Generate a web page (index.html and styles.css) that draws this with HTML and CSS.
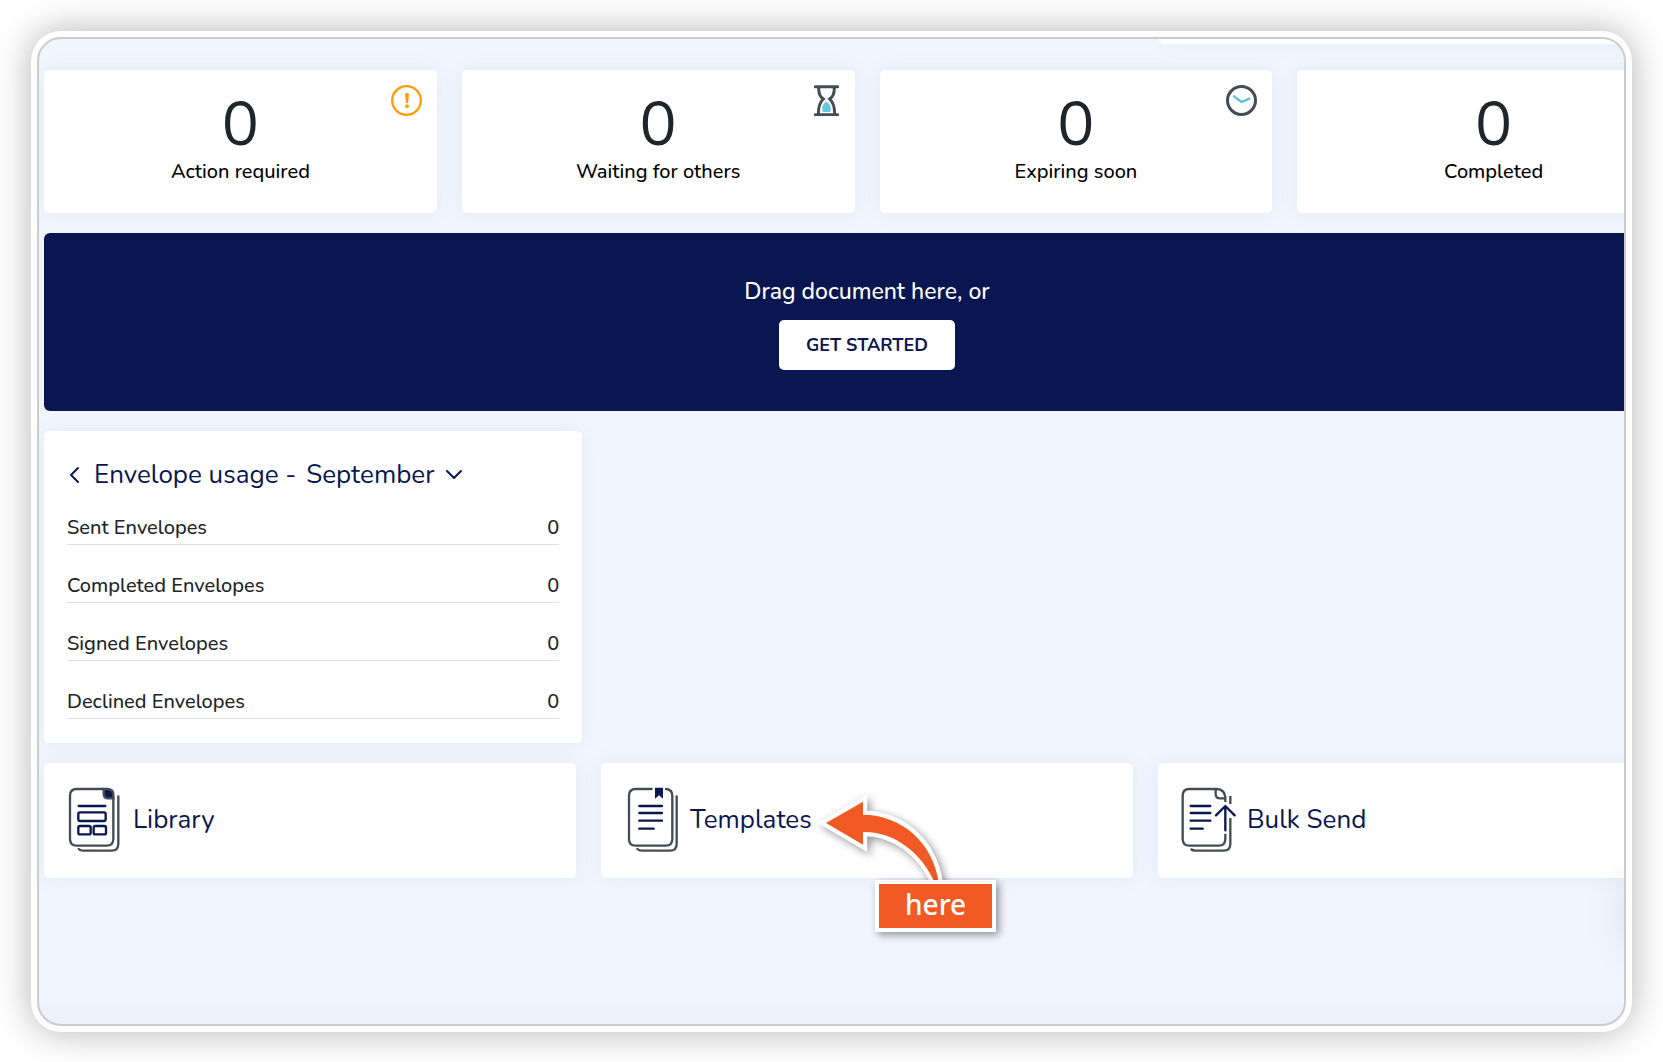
FILE: index.html
```html
<!DOCTYPE html>
<html lang="en">
<head>
<meta charset="utf-8">
<meta name="viewport" content="width=device-width, initial-scale=1">
<title>Dashboard</title>
<link rel="stylesheet" href="styles.css">
</head>
<body>
<div class="frame">
  <main class="screen">
    <div class="content">
      <div class="toolbar-card"></div>

      <section class="stats">
        <article class="card stat">
          <svg class="stat-icon" viewBox="0 0 93 93" aria-hidden="true">
            <circle cx="46.500" cy="46.500" r="43" fill="none" stroke="#ff9c0a" stroke-width="7"/>
            <path d="M42 27q0-3 6-3t6 3l-3 27h-6z" fill="#ff9c0a"/>
            <circle cx="48" cy="63.500" r="5.500" fill="#ff9c0a"/>
          </svg>
          <div class="stat-value">0</div>
          <div class="stat-label">Action required</div>
        </article>
        <article class="card stat">
          <svg class="stat-icon" viewBox="0 0 93 93" aria-hidden="true">
            <g fill="none" stroke="#454c53" stroke-width="9" stroke-linecap="round">
              <path d="M19 5H86M19 89H86"/>
              <path d="M29 6C29 26 32 34 43 42C34 50 28 66 28 88M76 6C76 26 73 34 62 42C71 50 77 66 77 88" stroke-linecap="butt"/>
            </g>
            <path d="M52 50C58 54 65 60 65 67V78Q65 81 62 81H43Q40 81 40 78V67C40 60 46 54 52 50Z" fill="#68c4e0"/>
          </svg>
          <div class="stat-value">0</div>
          <div class="stat-label">Waiting for others</div>
        </article>
        <article class="card stat">
          <svg class="stat-icon" viewBox="0 0 93 93" aria-hidden="true">
            <circle cx="46.500" cy="46.500" r="42" fill="none" stroke="#454c53" stroke-width="9"/>
            <path d="M24 34L47 51L70 41" fill="none" stroke="#5fc0de" stroke-width="7" stroke-linecap="round" stroke-linejoin="round"/>
          </svg>
          <div class="stat-value">0</div>
          <div class="stat-label">Expiring soon</div>
        </article>
        <article class="card stat">
          <div class="stat-value">0</div>
          <div class="stat-label">Completed</div>
        </article>
      </section>

      <section class="dropzone">
        <p class="dropzone-text">Drag document here, or</p>
        <button class="start-button" type="button">GET STARTED</button>
      </section>

      <section class="card usage">
        <div class="usage-head">
          <button class="previous" type="button" aria-label="Previous month">
            <svg width="12" height="18" viewBox="0 0 12 18" aria-hidden="true"><path d="M10 2L3 9L10 16"/></svg>
          </button>
          <label class="usage-title" for="month">Envelope usage -</label>
          <div class="month">
            <select class="month-select" id="month">
              <option>May</option>
              <option>June</option>
              <option>July</option>
              <option>August</option>
              <option selected>September</option>
            </select>
            <svg width="18" height="12" viewBox="0 0 18 12" aria-hidden="true"><path d="M2 2L9 9L16 2"/></svg>
          </div>
        </div>
        <table class="usage-table">
          <tr><th scope="row">Sent Envelopes</th><td>0</td></tr>
          <tr><th scope="row">Completed Envelopes</th><td>0</td></tr>
          <tr><th scope="row">Signed Envelopes</th><td>0</td></tr>
          <tr><th scope="row">Declined Envelopes</th><td>0</td></tr>
        </table>
      </section>

      <nav class="shortcuts">
        <a class="card shortcut" href="#library">
          <svg class="shortcut-icon" viewBox="57 60 156 195" aria-hidden="true">
            <g fill="none" stroke="#454c53" stroke-width="7" stroke-linecap="round">
              <path d="M160 63H80Q60 63 60 83V213Q60 233 80 233H170Q190 233 190 213V90"/>
              <path d="M205 85V228Q205 248 185 248H100Q91 248 86 243"/>
            </g>
            <path d="M161 63H174Q190 65 190 80V91H174Q161 91 161 77Z" fill="#0a1650" stroke="#454c53" stroke-width="7"/>
            <g fill="none" stroke="#0a1650" stroke-width="7" stroke-linecap="round">
              <path d="M86 114H166"/>
              <rect x="85" y="133" width="82" height="26" rx="5"/>
              <rect x="85" y="174" width="37" height="25" rx="5"/>
              <rect x="131" y="174" width="37" height="25" rx="5"/>
            </g>
          </svg>
          <span>Library</span>
        </a>
        <div class="shortcut-slot">
          <a class="card shortcut" href="#templates">
            <svg class="shortcut-icon" viewBox="48 60 156 195" aria-hidden="true">
              <g fill="none" stroke="#454c53" stroke-width="7" stroke-linecap="round">
                <path d="M125 63H77Q57 63 57 83V213Q57 233 77 233H167Q187 233 187 213V83Q187 65 168 63"/>
                <path d="M200 85V228Q200 248 180 248H96Q87 248 82 243"/>
              </g>
              <path d="M135 59H159V92L147 82L135 92Z" fill="#0a1650"/>
              <path d="M88 114H156M88 135H156M88 158H156M88 182H131" fill="none" stroke="#0a1650" stroke-width="7" stroke-linecap="round"/>
            </svg>
            <span>Templates</span>
          </a>
          <div class="callout">
            <svg class="callout-arrow" viewBox="600 60 600 300" aria-hidden="true">
              <path d="M648 162L759 98V137C870 138 969 215 987 345L976 345C936 250 850 186 759 189V227Z"/>
            </svg>
            <span class="callout-label">here</span>
          </div>
        </div>
        <a class="card shortcut" href="#bulk-send">
          <svg class="shortcut-icon" viewBox="99 60 156 195" aria-hidden="true">
            <g fill="none" stroke="#454c53" stroke-width="7" stroke-linecap="butt">
              <path d="M226 102V88Q224 64 200 63H118Q98 63 98 83V213Q98 233 118 233H206Q226 233 226 213V197"/>
              <path d="M197 64V78Q197 91 210 91H226"/>
              <path d="M241 84V108M241 150V228Q241 248 221 248H138Q128 248 122 243"/>
            </g>
            <path d="M122 114H181M122 135H181M122 158H181M122 182H158M226 187V116M198 142L226 114L254 142" fill="none" stroke="#0a1650" stroke-width="7" stroke-linecap="round" stroke-linejoin="round"/>
          </svg>
          <span>Bulk Send</span>
        </a>
      </nav>
    </div>
  </main>
</div>
</body>
</html>
```
FILE: styles.css
```css
* {
  box-sizing: border-box;
}

body {
  margin: 0;
  padding: 31px 31px 30px;
  min-height: 100vh;
  display: flex;
  background: #fff;
  color: #212529;
  font-family: "Nunito", "Lato", sans-serif;
  font-size: 20px;
  font-weight: 500;
  line-height: 24px;
}

button,
select {
  font: inherit;
  color: inherit;
  border: 0;
  background: none;
  padding: 0;
  margin: 0;
}

.frame {
  flex: 1;
  min-width: 0;
  display: flex;
  padding: 6px;
  border-radius: 30px;
  background: #fff;
  box-shadow: 0 0 36px rgba(0, 0, 0, 0.3);
}

.screen {
  position: relative;
  flex: 1;
  min-width: 0;
  overflow: hidden;
  border: 2px solid #ccc;
  border-radius: 24px;
  background: linear-gradient(to top, #eaf1f9, #f0f5fe 32px);
}

/* soft edge of the help bubble docked beyond the right side */
.screen::after {
  content: "";
  position: absolute;
  right: -74px;
  bottom: 75px;
  width: 68px;
  height: 68px;
  border-radius: 50%;
  box-shadow: 0 0 50px rgba(20, 40, 80, 0.16);
}

/* the dashboard runs past the right side of the screen */
.content {
  display: flex;
  flex-direction: column;
  gap: 20px;
  margin: 0 -66px 0 5px;
}

.card {
  border-radius: 5px;
  background: #fff;
  box-shadow: 0 0 20px rgba(80, 130, 150, 0.08);
}

.toolbar-card {
  align-self: flex-end;
  width: calc((100% - 50px) / 3);
  height: 5px;
  margin-bottom: 6px;
  border-radius: 0 0 5px 5px;
  background: #fff;
  box-shadow: 0 0 20px rgba(80, 130, 150, 0.08);
}

.stats {
  display: grid;
  grid-template-columns: repeat(4, 1fr);
  gap: 25px;
}

.stat {
  position: relative;
  padding: 23px 20px 29px;
  text-align: center;
}

.stat-icon {
  position: absolute;
  top: 15px;
  right: 15px;
  width: 31px;
  height: 31px;
}

.stat-value {
  font-size: 62px;
  font-weight: 400;
  line-height: 64px;
}

.stat-label {
  margin-top: 3px;
  color: #000;
}

.dropzone {
  display: flex;
  flex-direction: column;
  align-items: center;
  gap: 13px;
  padding: 44px 20px 41px;
  border-radius: 6px;
  background: #0a1650;
}

.dropzone-text {
  margin: 0;
  color: #fff;
  font-size: 23px;
  line-height: 30px;
}

.start-button {
  height: 50px;
  padding: 0 27px;
  border-radius: 5px;
  background: #fff;
  color: #0a1650;
  font-size: 18px;
  font-weight: 700;
}

.usage {
  width: calc(33% - 5px);
  padding: 33px 23px 24px;
}

.usage-head {
  display: flex;
  align-items: center;
  height: 22px;
  padding-left: 1px;
  color: #0a1650;
  font-size: 26px;
  font-weight: 400;
  line-height: 32px;
}

.usage-head svg {
  display: block;
  fill: none;
  stroke: currentColor;
  stroke-width: 2;
  stroke-linecap: round;
  stroke-linejoin: round;
}

.previous {
  margin-right: 14px;
}

.usage-title {
  margin-right: 10px;
}

.month {
  display: flex;
  align-items: center;
  gap: 10px;
}

.month-select {
  appearance: none;
}

.usage-table {
  width: 100%;
  border-collapse: collapse;
}

.usage-table th,
.usage-table td {
  height: 58px;
  padding: 0 0 4px;
  border-bottom: 1px solid #dedfe0;
  font-weight: 500;
  text-align: left;
  vertical-align: bottom;
}

.usage-table td {
  text-align: right;
}

.shortcuts {
  display: grid;
  grid-template-columns: repeat(3, 1fr);
  gap: 25px;
}

.shortcut-slot {
  position: relative;
}

.shortcut {
  display: flex;
  align-items: center;
  gap: 12px;
  padding: 25px 25px;
  color: #0a1650;
  font-size: 26px;
  font-weight: 400;
  line-height: 32px;
  text-decoration: none;
}

.shortcut-icon {
  width: 52px;
  height: 65px;
  overflow: visible;
}

.callout {
  position: absolute;
  top: 26px;
  left: 209px;
  width: 200px;
}

.callout-arrow {
  display: block;
  width: 200px;
  height: 100px;
  overflow: visible;
  filter: drop-shadow(3px 3px 4px rgba(0, 0, 0, 0.4));
}

.callout-arrow path {
  fill: #f15a24;
  stroke: #fff;
  stroke-width: 25;
  stroke-miterlimit: 6;
  paint-order: stroke;
}

.callout-label {
  position: absolute;
  top: 91px;
  left: 65px;
  width: 121px;
  padding: 3px 0 7px;
  border: 4px solid #fff;
  background: #f15a24;
  box-shadow: 3px 3px 8px rgba(0, 0, 0, 0.4);
  color: #fff;
  font-family: "Noto Sans", sans-serif;
  font-size: 28px;
  line-height: 34px;
  text-align: center;
}
```
